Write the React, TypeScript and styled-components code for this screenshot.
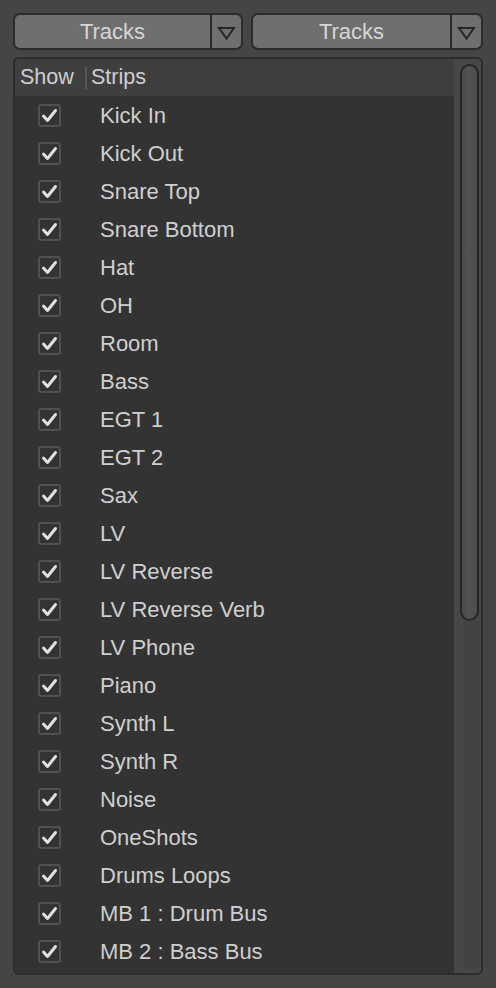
import styled, { createGlobalStyle } from 'styled-components';

const strips = [
  'Kick In',
  'Kick Out',
  'Snare Top',
  'Snare Bottom',
  'Hat',
  'OH',
  'Room',
  'Bass',
  'EGT 1',
  'EGT 2',
  'Sax',
  'LV',
  'LV Reverse',
  'LV Reverse Verb',
  'LV Phone',
  'Piano',
  'Synth L',
  'Synth R',
  'Noise',
  'OneShots',
  'Drums Loops',
  'MB 1 : Drum Bus',
  'MB 2 : Bass Bus',
];

const GlobalStyle = createGlobalStyle`
  html, body {
    margin: 0;
    padding: 0;
    background: #454545;
  }
  * {
    box-sizing: border-box;
  }
`;

const Page = styled.div`
  width: 496px;
  height: 988px;
  padding: 13px 13px 0 13px;
  font-family: 'Liberation Sans', Arial, sans-serif;
  color: #d2d2d2;
`;

const Toolbar = styled.div`
  display: grid;
  grid-template-columns: 230px 232px;
  gap: 8px;
  height: 37px;
`;

const Dropdown = styled.div`
  display: flex;
  height: 100%;
  background: #6f6f6f;
  border: 2px solid #2b2b2b;
  border-radius: 7px;
  overflow: hidden;
`;

const DropLabel = styled.div`
  flex: 1;
  display: flex;
  align-items: center;
  justify-content: center;
  font-size: 22px;
  color: #d6d6d6;
  border-right: 2px solid #2b2b2b;
`;

const DropArrow = styled.div`
  width: 29px;
  display: flex;
  align-items: center;
  justify-content: center;
  padding-top: 2px;
`;

const Panel = styled.div`
  margin-top: 7px;
  height: 918px;
  border: 2px solid #2c2c2c;
  border-radius: 6px;
  background: #404040;
  display: grid;
  grid-template-columns: 439px 1fr;
  overflow: hidden;
`;

const ListColumn = styled.div`
  display: flex;
  flex-direction: column;
`;

const Header = styled.div`
  height: 37px;
  display: flex;
  align-items: center;
  font-size: 21.5px;
  color: #cfcfcf;
  background: #3f3f3f;
`;

const HeaderCell = styled.div<{ $width?: number }>`
  width: ${(p) => (p.$width ? `${p.$width}px` : 'auto')};
  padding-left: ${(p) => (p.$width ? '5px' : '0')};
  display: flex;
  align-items: center;
`;

const HeaderDivider = styled.div`
  width: 2px;
  height: 22px;
  background: #575757;
  margin: 0 4px 0 0;
`;

const Rows = styled.div`
  flex: 1;
  background: #333333;
`;

const Row = styled.div`
  height: 38px;
  display: flex;
  align-items: center;
  padding-left: 23px;
  gap: 39px;
`;

const CheckBox = styled.div`
  width: 23px;
  height: 23px;
  margin-top: 1px;
  border: 2px solid #515151;
  border-radius: 3px;
  display: flex;
  align-items: center;
  justify-content: center;
`;

const StripName = styled.span`
  font-size: 22px;
  color: #cfcfcf;
  white-space: nowrap;
  padding-top: 2px;
`;

const ScrollTrack = styled.div`
  background: #474747;
  padding: 5px 1px 4px 6px;
  display: flex;
  flex-direction: column;
`;

const ScrollGroove = styled.div`
  flex: 1;
  background: #434343;
  border-left: 1px solid #4b4b4b;
  margin-left: 2px;
`;

const ScrollThumb = styled.div`
  height: 557px;
  margin-right: 1px;
  border: 2px solid #262626;
  border-radius: 10px;
  background: linear-gradient(90deg, #4a4a4a 0%, #525252 40%, #4c4c4c 100%);
`;

const Arrow = () => (
  <svg width="19" height="14" viewBox="0 0 19 14">
    <path d="M2 2 H17 L9.5 12.5 Z" fill="none" stroke="#262626" strokeWidth="2" strokeLinejoin="miter" />
  </svg>
);

const Check = () => (
  <svg width="17" height="15" viewBox="0 0 17 15">
    <path d="M2.5 8 L6.5 12.5 L14.5 2.5" fill="none" stroke="#e2e2e2" strokeWidth="3" strokeLinecap="round" strokeLinejoin="round" />
  </svg>
);

export default function App() {
  return (
    <Page>
      <GlobalStyle />
      <Toolbar>
        <Dropdown>
          <DropLabel>Tracks</DropLabel>
          <DropArrow>
            <Arrow />
          </DropArrow>
        </Dropdown>
        <Dropdown>
          <DropLabel>Tracks</DropLabel>
          <DropArrow>
            <Arrow />
          </DropArrow>
        </Dropdown>
      </Toolbar>
      <Panel>
        <ListColumn>
          <Header>
            <HeaderCell $width={70}>Show</HeaderCell>
            <HeaderDivider />
            <HeaderCell>Strips</HeaderCell>
          </Header>
          <Rows>
            {strips.map((name) => (
              <Row key={name}>
                <CheckBox>
                  <Check />
                </CheckBox>
                <StripName>{name}</StripName>
              </Row>
            ))}
          </Rows>
        </ListColumn>
        <ScrollTrack>
          <ScrollThumb />
          <ScrollGroove />
        </ScrollTrack>
      </Panel>
    </Page>
  );
}
